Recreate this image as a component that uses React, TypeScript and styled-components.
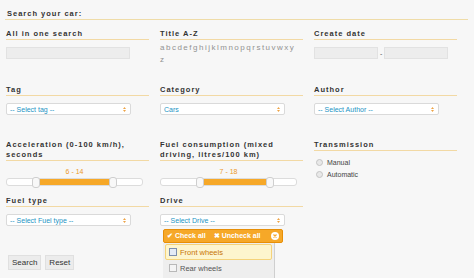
import styled, { createGlobalStyle } from "styled-components";

const GlobalStyle = createGlobalStyle`
  body {
    margin: 0;
    background: #f7f7f7;
    font-family: "Liberation Sans", Arial, sans-serif;
  }
`;

const Page = styled.div`
  box-sizing: border-box;
  width: 474px;
  min-height: 100vh;
  padding: 9px 6px 0 5px;
`;

const Heading = styled.div`
  padding-left: 2px;
  line-height: 10px;
  font-size: 7.5px;
  font-weight: bold;
  letter-spacing: 1px;
  color: #333;
  border-bottom: 1px solid #efdca8;
`;

const Grid = styled.div`
  display: grid;
  grid-template-columns: repeat(3, 143px);
  grid-template-rows: 56px 55px 56px 56px;
  column-gap: 11px;
  align-items: start;
  margin-top: 9px;
  padding-left: 1px;
`;

const Field = styled.div`
  display: flex;
  flex-direction: column;
  position: relative;
`;

const Label = styled.div`
  line-height: 10px;
  font-size: 7.5px;
  font-weight: bold;
  letter-spacing: 1px;
  color: #333;
  border-bottom: 1px solid #f2d9a4;
`;

const TextInput = styled.div<{ $w?: number }>`
  box-sizing: border-box;
  width: ${(p) => p.$w ?? 124}px;
  height: 12px;
  background: #ededed;
  border: 1px solid #e2e2e2;
`;

const InputRow = styled.div`
  display: flex;
  align-items: center;
  gap: 2px;
  margin-top: 7px;
  font-size: 7px;
  color: #555;
`;

const Letters = styled.div`
  margin-top: 2px;
  width: 140px;
  line-height: 12px;
  font-size: 8px;
  letter-spacing: 1.5px;
  color: #929292;
  word-break: break-all;
`;

const SelectBox = styled.div`
  box-sizing: border-box;
  width: 125px;
  height: 12px;
  margin-top: 7px;
  padding: 0 4px 0 3px;
  display: flex;
  align-items: center;
  justify-content: space-between;
  background: #fff;
  border: 1px solid #dadada;
  border-radius: 2px;
  font-size: 7px;
  color: #1c94c4;
`;

const Arrows = () => (
  <svg width="3" height="5" viewBox="0 0 3 5">
    <path d="M1.5 0L3 2H0zM0 3h3L1.5 5z" fill="#eea448" />
  </svg>
);

const Select = ({ text }: { text: string }) => (
  <SelectBox>
    <span>{text}</span>
    <Arrows />
  </SelectBox>
);

const RangeValue = styled.div`
  width: 137px;
  margin-top: 6px;
  line-height: 10px;
  text-align: center;
  font-size: 7px;
  color: #eb9a2c;
`;

const Track = styled.div`
  position: relative;
  box-sizing: border-box;
  width: 137px;
  height: 8px;
  margin-top: 1px;
  background: #fff;
  border: 1px solid #dcdcdc;
  border-radius: 3px;
`;

const Range = styled.div`
  position: absolute;
  top: 0;
  bottom: 0;
  background: #f6a828;
`;

const Handle = styled.div`
  position: absolute;
  top: -2px;
  box-sizing: border-box;
  width: 8px;
  height: 11px;
  margin-left: -4px;
  background: #f8f8f8;
  border: 1px solid #cfcfcf;
  border-radius: 3px;
`;

const Slider = ({
  min,
  max,
  low,
  high,
}: {
  min: number;
  max: number;
  low: number;
  high: number;
}) => {
  const a = ((low - min) / (max - min)) * 100;
  const b = ((high - min) / (max - min)) * 100;
  return (
    <>
      <RangeValue>
        {low} - {high}
      </RangeValue>
      <Track>
        <Range style={{ left: `${a}%`, width: `${b - a}%` }} />
        <Handle style={{ left: `${a}%` }} />
        <Handle style={{ left: `${b}%` }} />
      </Track>
    </>
  );
};

const Radios = styled.div`
  margin-top: 5px;
  display: flex;
  flex-direction: column;
`;

const RadioRow = styled.label`
  display: flex;
  align-items: center;
  gap: 4px;
  height: 12px;
  padding-left: 2px;
  font-size: 7px;
  color: #444;
`;

const Radio = styled.span`
  box-sizing: border-box;
  width: 7px;
  height: 7px;
  border-radius: 50%;
  border: 1px solid #c4c4c4;
  background: #e8e8e8;
`;

const Dropdown = styled.div`
  position: absolute;
  top: calc(100% + 3px);
  left: 3px;
  width: 120px;
  z-index: 2;
`;

const DropHeader = styled.div`
  box-sizing: border-box;
  height: 14px;
  display: flex;
  align-items: center;
  gap: 8px;
  padding: 0 3px;
  background: #f6a828;
  border: 1px solid #e78f08;
  border-radius: 2px;
  color: #fff;
  font-size: 7px;
  font-weight: bold;
`;

const HeaderLink = styled.span`
  display: flex;
  align-items: center;
  gap: 1px;
`;

const Close = styled.span`
  margin-left: auto;
  display: flex;
`;

const List = styled.div`
  box-sizing: border-box;
  width: 112px;
  padding: 1px 2px 4px;
  background: #eeeeee;
  border-right: 1px solid #cfcfcf;
  display: flex;
  flex-direction: column;
`;

const Option = styled.div<{ $hover?: boolean }>`
  box-sizing: border-box;
  height: 16px;
  display: flex;
  align-items: center;
  gap: 3px;
  padding: 0 3px;
  border: 1px solid ${(p) => (p.$hover ? "#f5d37a" : "transparent")};
  background: ${(p) => (p.$hover ? "#fdf5ce" : "transparent")};
  border-radius: 2px;
  font-size: 7.5px;
  color: ${(p) => (p.$hover ? "#c77405" : "#555")};
`;

const Check = styled.span<{ $hover?: boolean }>`
  box-sizing: border-box;
  width: 8px;
  height: 8px;
  border: 1px solid ${(p) => (p.$hover ? "#7d8fae" : "#b8b8b8")};
  background: ${(p) => (p.$hover ? "#e4ebf6" : "#f4f4f4")};
`;

const Actions = styled.div`
  display: flex;
  gap: 4px;
  margin-top: 3px;
  padding-left: 3px;
`;

const Button = styled.button`
  box-sizing: border-box;
  height: 15px;
  padding: 0 3px;
  background: #ececec;
  border: 1px solid #e0e0e0;
  font-family: "Liberation Sans", Arial, sans-serif;
  font-size: 8px;
  color: #333;
`;

const App = () => (
  <Page>
    <GlobalStyle />
    <Heading>Search your car:</Heading>
    <Grid>
      <Field>
        <Label>All in one search</Label>
        <InputRow>
          <TextInput />
        </InputRow>
      </Field>
      <Field>
        <Label>Title A-Z</Label>
        <Letters>abcdefghijklmnopqrstuvwxyz</Letters>
      </Field>
      <Field>
        <Label>Create date</Label>
        <InputRow>
          <TextInput $w={64} />-<TextInput $w={64} />
        </InputRow>
      </Field>

      <Field>
        <Label>Tag</Label>
        <Select text="-- Select tag --" />
      </Field>
      <Field>
        <Label>Category</Label>
        <Select text="Cars" />
      </Field>
      <Field>
        <Label>Author</Label>
        <Select text="-- Select Author --" />
      </Field>

      <Field>
        <Label>
          Acceleration (0-100 km/h),
          <br />
          seconds
        </Label>
        <Slider min={3} max={17} low={6} high={14} />
      </Field>
      <Field>
        <Label>
          Fuel consumption (mixed
          <br />
          driving, litres/100 km)
        </Label>
        <Slider min={1} max={22} low={7} high={18} />
      </Field>
      <Field>
        <Label>Transmission</Label>
        <Radios>
          <RadioRow>
            <Radio />
            Manual
          </RadioRow>
          <RadioRow>
            <Radio />
            Automatic
          </RadioRow>
        </Radios>
      </Field>

      <Field>
        <Label>Fuel type</Label>
        <Select text="-- Select Fuel type --" />
      </Field>
      <Field>
        <Label>Drive</Label>
        <Select text="-- Select Drive --" />
        <Dropdown>
          <DropHeader>
            <HeaderLink>✔ Check all</HeaderLink>
            <HeaderLink>✖ Uncheck all</HeaderLink>
            <Close>
              <svg width="8" height="8" viewBox="0 0 8 8">
                <circle cx="4" cy="4" r="4" fill="#fff" />
                <path d="M2.5 2.5l3 3M5.5 2.5l-3 3" stroke="#f6a828" strokeWidth="1.2" />
              </svg>
            </Close>
          </DropHeader>
          <List>
            <Option $hover>
              <Check $hover />
              Front wheels
            </Option>
            <Option>
              <Check />
              Rear wheels
            </Option>
          </List>
        </Dropdown>
      </Field>
    </Grid>
    <Actions>
      <Button>Search</Button>
      <Button>Reset</Button>
    </Actions>
  </Page>
);

export default App;
